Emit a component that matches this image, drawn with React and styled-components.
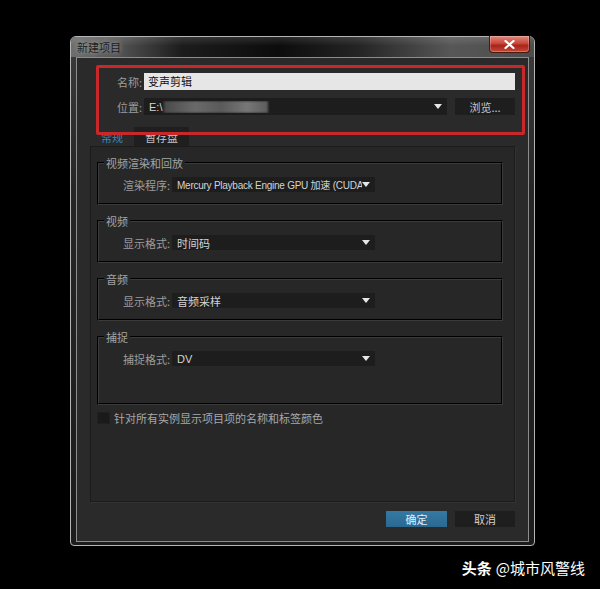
import React from "react";
import styled, { createGlobalStyle } from "styled-components";

const GlobalStyle = createGlobalStyle`
  html, body {
    margin: 0;
    padding: 0;
    background: #000;
  }
  * {
    box-sizing: border-box;
  }
`;

const FONT = `"Noto Sans CJK SC", "Liberation Sans", sans-serif`;
const LATIN_FONT = `"Liberation Sans", "Noto Sans CJK SC", sans-serif`;

// 바깥 검은 화면
const Page = styled.div`
  width: 600px;
  height: 589px;
  background: #000;
  padding-top: 36px;
  display: flex;
  flex-direction: column;
  font-family: ${FONT};
  overflow: hidden;
`;

// 윈도우 프레임
const Window = styled.div`
  margin-left: 70px;
  width: 465px;
  height: 510px;
  border: 1px solid #b4b4b4;
  border-radius: 6px 6px 4px 4px;
  background: linear-gradient(180deg, #3c3c3c 0%, #262626 30%, #1c1c1c 100%);
  display: flex;
  flex-direction: column;
`;

const TitleBar = styled.div`
  height: 20px;
  display: flex;
  justify-content: space-between;
  align-items: flex-start;
  padding-left: 6px;
  padding-right: 4px;
  border-radius: 5px 5px 0 0;
  background:
    linear-gradient(180deg, rgba(255, 255, 255, 0.12) 0%, rgba(255, 255, 255, 0) 45%),
    linear-gradient(90deg, #6e6e6e 0%, #555 10%, #1c1c1c 24%, #0c0c0c 45%, #242424 62%, #575757 82%, #4c4c4c 100%);
`;

const Title = styled.span`
  margin-top: 3px;
  font-size: 11px;
  line-height: 14px;
  color: #1e1e1e;
  text-shadow: 0 0 5px rgba(255, 255, 255, 0.55);
`;

const CloseButton = styled.div`
  width: 41px;
  height: 17px;
  margin-top: -1px;
  border: 1px solid #4a1712;
  border-top: none;
  border-radius: 0 0 4px 4px;
  background: linear-gradient(180deg, #e18a7e 0%, #c9493c 45%, #a82419 60%, #c44a36 100%);
  box-shadow: inset 0 0 0 1px rgba(255, 255, 255, 0.25);
  display: flex;
  align-items: center;
  justify-content: center;
`;

const Content = styled.div`
  flex: 1;
  margin: 0 5px 3px 5px;
  border: 1px solid #8c8c8c;
  background: #2a2a2a;
  padding: 15px 13px 14px 13px;
  display: flex;
  flex-direction: column;
`;

// 상단 이름/위치 영역
const Header = styled.div`
  position: relative;
  display: flex;
  flex-direction: column;
  gap: 8px;
`;

// 빨간 강조 테두리 (스크린샷 위 표시)
const Highlight = styled.div`
  position: absolute;
  top: -8px;
  left: 6px;
  right: -10px;
  bottom: -20px;
  border: 3px solid #c9282a;
  border-radius: 2px;
  z-index: 2;
  pointer-events: none;
`;

const Row = styled.div`
  display: flex;
  align-items: center;
  height: ${(p) => p.$h || 15}px;
`;

const Label = styled.span`
  width: ${(p) => p.$w}px;
  margin-right: 2px;
  text-align: right;
  font-size: 11px;
  color: #9c9c9c;
  white-space: nowrap;
`;

const NameInput = styled.div`
  flex: 1;
  height: 17px;
  background: #e6e6e6;
  color: #111;
  font-size: 11px;
  line-height: 17px;
  padding-left: 4px;
`;

const Select = styled.div`
  width: ${(p) => (p.$w ? `${p.$w}px` : "auto")};
  flex: ${(p) => (p.$w ? "none" : 1)};
  height: ${(p) => p.$h || 15}px;
  background: #1d1d1d;
  color: #d4d4d4;
  font-family: ${LATIN_FONT};
  font-size: ${(p) => (p.$compact ? "10px" : "11px")};
  letter-spacing: ${(p) => (p.$compact ? "-0.25px" : "normal")};
  display: flex;
  align-items: center;
  padding: 0 5px;
  white-space: nowrap;
  overflow: hidden;
`;

const SelectText = styled.span`
  flex: 1;
  overflow: hidden;
  display: flex;
  align-items: center;
`;

const Blurred = styled.span`
  display: inline-block;
  width: 104px;
  height: 12px;
  margin-left: 2px;
  background: linear-gradient(90deg, #4a4a4a 0%, #6a6a6a 30%, #5a5a5a 55%, #777 80%, #5c5c5c 100%);
  filter: blur(1px);
`;

const Browse = styled.div`
  width: 60px;
  height: 17px;
  margin-left: 8px;
  background: #1e1e1e;
  color: #c8c8c8;
  font-size: 11px;
  display: flex;
  align-items: center;
  justify-content: center;
`;

const Tabs = styled.div`
  display: flex;
  margin-top: 12px;
  height: 19px;
`;

const Tab = styled.div`
  width: ${(p) => p.$w}px;
  height: 19px;
  display: flex;
  align-items: center;
  justify-content: center;
  font-size: 11px;
  color: ${(p) => (p.$active ? "#3d86c4" : "#c4c4c4")};
  background: ${(p) => (p.$active ? "transparent" : "#1f1f1f")};
`;

const Panel = styled.div`
  flex: 1;
  border: 1px solid #1b1b1b;
  box-shadow: 1px 1px 0 #333;
  background: #272727;
  padding: 9px 11px 0 6px;
  display: flex;
  flex-direction: column;
`;

const Group = styled.fieldset`
  margin: 0 0 9px 0;
  padding: 7px 0 ${(p) => p.$pb || 11}px 0;
  border: 2px groove #3a3a3a;
  min-width: 0;
`;

const Legend = styled.legend`
  margin-left: 5px;
  padding: 0 2px;
  font-size: 11px;
  line-height: 14px;
  color: #a4a4a4;
`;

const CheckRow = styled.div`
  display: flex;
  align-items: center;
  gap: 4px;
  margin-top: -3px;
  height: 13px;
`;

const Checkbox = styled.span`
  width: 13px;
  height: 12px;
  background: #1a1a1a;
  border: 1px solid #202020;
`;

const CheckText = styled.span`
  font-size: 11px;
  color: #a8a8a8;
`;

const Footer = styled.div`
  display: flex;
  justify-content: flex-end;
  gap: 8px;
  margin-top: 9px;
`;

const Button = styled.div`
  width: ${(p) => p.$w}px;
  height: 16px;
  display: flex;
  align-items: center;
  justify-content: center;
  font-size: 11px;
  color: ${(p) => (p.$primary ? "#e4eef5" : "#cfcfcf")};
  background: ${(p) =>
    p.$primary ? "linear-gradient(180deg, #3579a3 0%, #2b6890 100%)" : "#1e1e1e"};
`;

const Watermark = styled.div`
  align-self: flex-end;
  margin-right: 15px;
  margin-top: 12px;
  font-size: 15px;
  color: #fff;
  display: flex;
  gap: 4px;
  align-items: center;
  line-height: 20px;
`;

const Bold = styled.span`
  font-weight: 700;
`;

function Arrow() {
  return (
    <svg width="8" height="5" viewBox="0 0 8 5">
      <path d="M0 0 L8 0 L4 5 Z" fill="#e6e6e6" />
    </svg>
  );
}

function Dropdown({ w, h, compact, children }) {
  return (
    <Select $w={w} $h={h} $compact={compact}>
      <SelectText>{children}</SelectText>
      <Arrow />
    </Select>
  );
}

const groups = [
  {
    title: "视频渲染和回放",
    label: "渲染程序:",
    value: "Mercury Playback Engine GPU 加速 (CUDA",
    compact: true,
  },
  { title: "视频", label: "显示格式:", value: "时间码" },
  { title: "音频", label: "显示格式:", value: "音频采样" },
  { title: "捕捉", label: "捕捉格式:", value: "DV", pb: 37 },
];

export default function App() {
  return (
    <>
      <GlobalStyle />
      <Page>
        <Window>
          <TitleBar>
            <Title>新建项目</Title>
            <CloseButton>
              <svg width="11" height="9" viewBox="0 0 11 9">
                <path d="M1.5 1 L9.5 8 M9.5 1 L1.5 8" stroke="#fff" strokeWidth="2.2" strokeLinecap="round" />
              </svg>
            </CloseButton>
          </TitleBar>
          <Content>
            <Header>
              <Highlight />
              <Row $h={17}>
                <Label $w={52}>名称:</Label>
                <NameInput>变声剪辑</NameInput>
              </Row>
              <Row $h={17}>
                <Label $w={52}>位置:</Label>
                <Dropdown h={17}>
                  E:\
                  <Blurred />
                </Dropdown>
                <Browse>浏览...</Browse>
              </Row>
            </Header>

            <Tabs>
              <Tab $w={44} $active>常规</Tab>
              <Tab $w={55}>暂存盘</Tab>
            </Tabs>

            <Panel>
              {groups.map((g) => (
                <Group key={g.title} $pb={g.pb}>
                  <Legend>{g.title}</Legend>
                  <Row>
                    <Label $w={71}>{g.label}</Label>
                    <Dropdown w={203} compact={g.compact}>{g.value}</Dropdown>
                  </Row>
                </Group>
              ))}
              <CheckRow>
                <Checkbox />
                <CheckText>针对所有实例显示项目项的名称和标签颜色</CheckText>
              </CheckRow>
            </Panel>

            <Footer>
              <Button $w={61} $primary>确定</Button>
              <Button $w={60}>取消</Button>
            </Footer>
          </Content>
        </Window>
        <Watermark>
          <Bold>头条</Bold>
          <span>@城市风警线</span>
        </Watermark>
      </Page>
    </>
  );
}
